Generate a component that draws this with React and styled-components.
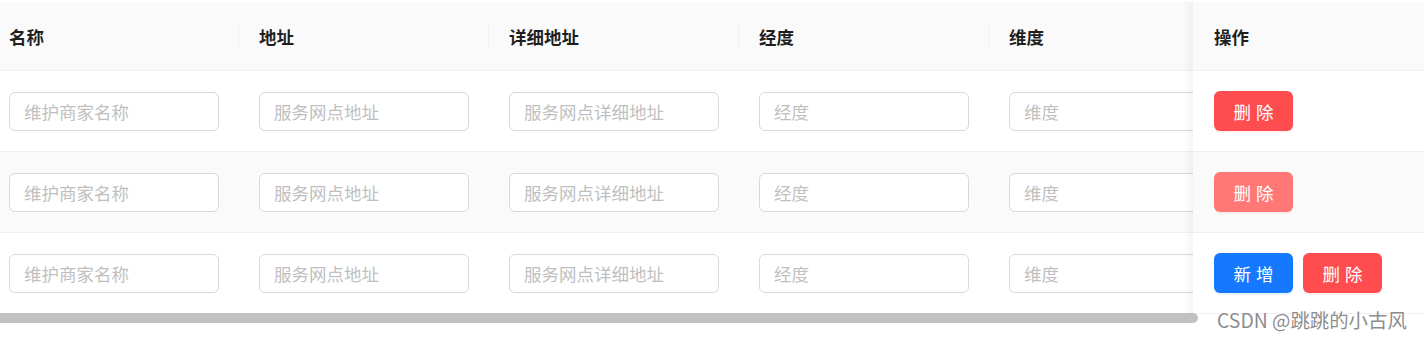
import React from "react";
import styled, { createGlobalStyle } from "styled-components";

const GlobalStyle = createGlobalStyle`
  html, body {
    margin: 0;
    padding: 0;
    background: #fff;
  }
  body {
    font-family: "Noto Sans CJK SC", "Noto Sans", sans-serif;
    color: rgba(0, 0, 0, 0.88);
  }
`;

const Page = styled.div`
  position: relative;
  width: 1424px;
  height: 339px;
  padding-top: 2px;
  box-sizing: border-box;
  overflow: hidden;
`;

const Row = styled.div`
  display: flex;
  height: ${(p) => (p.$head ? "69px" : "81px")};
  background: ${(p) => (p.$head || p.$hover ? "#fafafa" : "#fff")};
  border-bottom: 1px solid #f0f0f0;
  box-sizing: border-box;
`;

const Scroll = styled.div`
  display: flex;
  width: 1193px;
  overflow: hidden;
  flex-shrink: 0;
`;

const Cell = styled.div`
  position: relative;
  flex: 0 0 250px;
  display: flex;
  align-items: center;
  padding-left: 9px;
  box-sizing: border-box;
`;

const HeadCell = styled(Cell)`
  font-size: 17.5px;
  font-weight: 700;
  color: rgba(0, 0, 0, 0.88);

  &::before {
    content: "";
    position: absolute;
    left: 238px;
    top: 20px;
    width: 1px;
    height: 28px;
    background: #f0f0f0;
  }
`;

const Fixed = styled.div`
  position: relative;
  flex: 1;
  display: flex;
  align-items: center;
  gap: 10px;
  padding-left: 21px;
  font-size: 17.5px;
  font-weight: ${(p) => (p.$head ? 700 : 400)};
  background: inherit;

  &::after {
    content: "";
    position: absolute;
    left: -10px;
    top: 0;
    bottom: -1px;
    width: 10px;
    background: linear-gradient(to left, rgba(0, 0, 0, 0.045), rgba(0, 0, 0, 0));
    pointer-events: none;
  }
`;

const Input = styled.input`
  width: 210px;
  height: 39px;
  padding: 0 14px;
  box-sizing: border-box;
  border: 1px solid #d9d9d9;
  border-radius: 6px;
  background: #fff;
  font-family: inherit;
  font-size: 17.5px;
  outline: none;
  flex-shrink: 0;

  &::placeholder {
    color: #bfbfbf;
  }
`;

const colors = {
  danger: "#ff4d4f",
  dangerLight: "#ff7875",
  primary: "#1677ff",
};

const Button = styled.button`
  width: 79px;
  height: 40px;
  border: none;
  border-radius: 6px;
  background: ${(p) => colors[p.$kind]};
  color: #fff;
  font-family: inherit;
  font-size: 17.5px;
  letter-spacing: 0.3em;
  text-indent: 0.3em;
  padding: 0;
  box-shadow: 0 2px 0 ${(p) => (p.$kind === "primary" ? "rgba(5,145,255,0.1)" : "rgba(255,38,5,0.06)")};
  cursor: pointer;
`;

const ScrollBar = styled.div`
  width: 1198px;
  height: 10px;
  margin-top: -1px;
  background: #c1c1c1;
  border-radius: 0 5px 5px 0;
`;

const Watermark = styled.div`
  position: absolute;
  left: 1217px;
  top: 305px;
  font-family: "Noto Sans CJK SC", "Liberation Sans", sans-serif;
  font-size: 19.4px;
  color: rgba(110, 110, 110, 0.8);
  text-shadow: 0 0 1px rgba(255, 255, 255, 0.8);
  white-space: nowrap;
`;

const columns = ["名称", "地址", "详细地址", "经度", "维度"];
const placeholders = ["维护商家名称", "服务网点地址", "服务网点详细地址", "经度", "维度"];

const rows = [
  { actions: [{ kind: "danger", label: "删除" }] },
  { hover: true, actions: [{ kind: "dangerLight", label: "删除" }] },
  {
    actions: [
      { kind: "primary", label: "新增" },
      { kind: "danger", label: "删除" },
    ],
  },
];

export default function App() {
  return (
    <>
      <GlobalStyle />
      <Page>
        <Row $head>
          <Scroll>
            {columns.map((c) => (
              <HeadCell key={c}>{c}</HeadCell>
            ))}
          </Scroll>
          <Fixed $head>操作</Fixed>
        </Row>
        {rows.map((r, i) => (
          <Row key={i} $hover={r.hover}>
            <Scroll>
              {placeholders.map((p) => (
                <Cell key={p}>
                  <Input placeholder={p} />
                </Cell>
              ))}
            </Scroll>
            <Fixed>
              {r.actions.map((a, j) => (
                <Button key={j} $kind={a.kind}>
                  {a.label}
                </Button>
              ))}
            </Fixed>
          </Row>
        ))}
        <ScrollBar />
        <Watermark>CSDN @跳跳的小古风</Watermark>
      </Page>
    </>
  );
}
